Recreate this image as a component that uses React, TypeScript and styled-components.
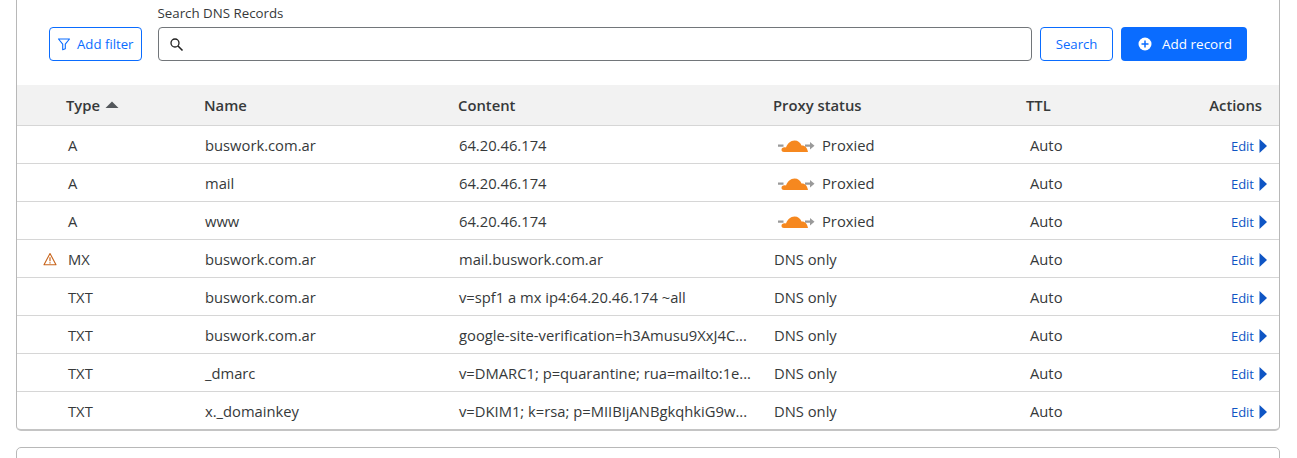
import { createGlobalStyle, styled } from 'styled-components';

interface IRecord {
    type: string,
    name: string,
    content: string,
    proxied: boolean,
    warning?: boolean
}

const records: IRecord[] = [
    { type: 'A', name: 'buswork.com.ar', content: '64.20.46.174', proxied: true },
    { type: 'A', name: 'mail', content: '64.20.46.174', proxied: true },
    { type: 'A', name: 'www', content: '64.20.46.174', proxied: true },
    { type: 'MX', name: 'buswork.com.ar', content: 'mail.buswork.com.ar', proxied: false, warning: true },
    { type: 'TXT', name: 'buswork.com.ar', content: 'v=spf1 a mx ip4:64.20.46.174 ~all', proxied: false },
    { type: 'TXT', name: 'buswork.com.ar', content: 'google-site-verification=h3Amusu9XxJ4C...', proxied: false },
    { type: 'TXT', name: '_dmarc', content: 'v=DMARC1; p=quarantine; rua=mailto:1e...', proxied: false },
    { type: 'TXT', name: 'x._domainkey', content: 'v=DKIM1; k=rsa; p=MIIBIjANBgkqhkiG9w...', proxied: false },
];

const GlobalStyle = createGlobalStyle`
    html, body {
        margin: 0;
        padding: 0;
        background: #fff;
        overflow: hidden;
    }
    body {
        font-family: "Open Sans", "Noto Sans", sans-serif;
        color: #36393a;
    }
`
const Page = styled.div`
    width: 1297px;
    height: 458px;
    padding: 0 17px 0 16px;
    box-sizing: border-box;
    overflow: hidden;
`
const Card = styled.div`
    border: 1px solid #b8b8b8;
    border-top: 0;
    border-bottom-width: 2px;
    border-bottom-color: #c4c4c4;
    border-radius: 0 0 5px 5px;
`
const NextCard = styled.div`
    margin-top: 16px;
    height: 40px;
    border: 1px solid #b8b8b8;
    border-radius: 5px 5px 0 0;
`
const Toolbar = styled.div`
    height: 85px;
    box-sizing: border-box;
    padding: 6px 32px 24px 32px;
    display: flex;
    align-items: flex-end;
    gap: 8px;
`
const SearchField = styled.div`
    flex: 1;
    margin-left: 8px;
    display: flex;
    flex-direction: column;
    gap: 6px;
`
const SearchLabel = styled.label`
    font-size: 13.3px;
    line-height: 16px;
    color: #36393a;
`
const SearchBox = styled.div`
    height: 34px;
    box-sizing: border-box;
    border: 1px solid #72767a;
    border-radius: 4px;
    display: flex;
    align-items: center;
    padding-left: 10px;
`
const OutlineButton = styled.button<{ $pad: number, $gap?: number }>`
    height: 34px;
    box-sizing: border-box;
    padding: 0 ${p => p.$pad}px;
    display: flex;
    align-items: center;
    gap: ${p => p.$gap ?? 0}px;
    background: #fff;
    border: 1px solid #0a6cff;
    border-radius: 4px;
    color: #0a6cff;
    font-family: inherit;
    font-size: 13.2px;
    white-space: nowrap;
`
const PrimaryButton = styled.button`
    height: 34px;
    box-sizing: border-box;
    padding: 0 15px 0 17px;
    display: flex;
    align-items: center;
    gap: 10px;
    background: #0a6cff;
    border: 0;
    border-radius: 4px;
    color: #fff;
    font-family: inherit;
    font-size: 13.5px;
    white-space: nowrap;
`
const Grid = `
    display: grid;
    grid-template-columns: 187px 254px 315px 253px 1fr 112px;
    align-items: center;
`
const HeaderRow = styled.div`
    ${Grid}
    height: 41px;
    box-sizing: border-box;
    background: #f2f2f2;
    border-bottom: 1px solid #d6d6d6;
    font-size: 14.8px;
    font-weight: 600;
    color: #36393a;
`
const HeaderCell = styled.div<{ $left?: number }>`
    padding-left: ${p => p.$left ?? 0}px;
    display: flex;
    align-items: center;
    gap: 5px;
`
const ActionsHead = styled.div`
    text-align: right;
    padding-right: 17px;
`
const Row = styled.div`
    ${Grid}
    height: 38px;
    box-sizing: border-box;
    padding-top: 1px;
    border-bottom: 1px solid #d6d6d6;
    font-size: 14.75px;
    color: #36393a;
    &:last-child {
        border-bottom: 0;
        height: 37px;
    }
`
const TypeCell = styled.div`
    position: relative;
    padding-left: 51px;
`
const WarnIcon = styled.svg`
    position: absolute;
    left: 26px;
    top: 50%;
    margin-top: -7px;
`
const NameCell = styled.div`
    padding-left: 1px;
`
const ContentCell = styled.div`
    padding-left: 1px;
    white-space: nowrap;
`
const ProxyCell = styled.div`
    padding-left: 1px;
    display: flex;
    align-items: center;
    gap: 7px;
`
const CloudSvg = styled.svg`
    margin-left: 3px;
`
const TtlCell = styled.div`
    padding-left: 4px;
`
const EditLink = styled.a`
    display: flex;
    justify-content: flex-end;
    align-items: center;
    gap: 5px;
    padding: 1px 12px 0 0;
    color: #0f55c4;
    font-size: 13px;
`

const SearchIcon = () => (
    <svg width="15" height="15" viewBox="0 0 15 15" fill="none" stroke="#222" strokeWidth="1.3">
        <circle cx="6" cy="6" r="4" />
        <path d="M9 9l4.5 4.5" strokeWidth="1.6" />
    </svg>
);

const FilterIcon = () => (
    <svg width="14" height="14" viewBox="0 0 14 14" fill="none" stroke="#0a6cff" strokeWidth="1.1">
        <path d="M1.5 2h11L8.3 7.2v4.6l-2.6 1V7.2z" strokeLinejoin="round" />
    </svg>
);

const PlusIcon = () => (
    <svg width="14" height="14" viewBox="0 0 14 14">
        <circle cx="7" cy="7" r="6.5" fill="#fff" />
        <path d="M7 3.5v7M3.5 7h7" stroke="#0a6cff" strokeWidth="1.5" />
    </svg>
);

const SortIcon = () => (
    <svg width="14" height="8" viewBox="0 0 14 8">
        <path d="M7 .5L13.5 7H.5z" fill="#54585c" />
    </svg>
);

const Cloud = () => (
    <CloudSvg width="38" height="16" viewBox="0 0 38 16">
        <path d="M1 7.600h5.500v2.200H1zM28 7.600h6v2.200h-6z" fill="#9a9a9a" />
        <path d="M33 5l4.500 3.700L33 12.400z" fill="#9a9a9a" />
        <path d="M7 15c-1.500 0-2.500-1-2.500-2.300 0-1.400 1.100-2.500 3-2.500.5 0 1 .1 1.500.3C10.500 6.500 13.500 3.500 17.500 3.500c3.500 0 6 2 7 5 3.300-.3 6 2.500 6.500 6.500z" fill="#f6881f" />
    </CloudSvg>
);

const Warning = () => (
    <WarnIcon width="14" height="14" viewBox="0 0 14 14" fill="none" stroke="#c8641b" strokeWidth="1.1">
        <path d="M7 1.500L13 12.800H1z" strokeLinejoin="round" />
        <path d="M7 5.200v4M7 10.200v1.200" strokeWidth="1.200" />
    </WarnIcon>
);

const Caret = () => (
    <svg width="8" height="14" viewBox="0 0 8 14">
        <path d="M.5 0L8 7 .5 14z" fill="#0f55c4" />
    </svg>
);

const App: React.FC = () => {
    return (
        <Page>
            <GlobalStyle />
            <Card>
                <Toolbar>
                    <OutlineButton $pad={7} $gap={6}><FilterIcon />Add filter</OutlineButton>
                    <SearchField>
                        <SearchLabel>Search DNS Records</SearchLabel>
                        <SearchBox><SearchIcon /></SearchBox>
                    </SearchField>
                    <OutlineButton $pad={14.5}>Search</OutlineButton>
                    <PrimaryButton><PlusIcon />Add record</PrimaryButton>
                </Toolbar>
                <HeaderRow>
                    <HeaderCell $left={49}>Type <SortIcon /></HeaderCell>
                    <HeaderCell>Name</HeaderCell>
                    <HeaderCell>Content</HeaderCell>
                    <HeaderCell>Proxy status</HeaderCell>
                    <HeaderCell>TTL</HeaderCell>
                    <ActionsHead>Actions</ActionsHead>
                </HeaderRow>
                {records.map((r, i) => (
                    <Row key={i}>
                        <TypeCell>{r.warning && <Warning />}{r.type}</TypeCell>
                        <NameCell>{r.name}</NameCell>
                        <ContentCell>{r.content}</ContentCell>
                        {r.proxied
                            ? <ProxyCell><Cloud />Proxied</ProxyCell>
                            : <ProxyCell>DNS only</ProxyCell>}
                        <TtlCell>Auto</TtlCell>
                        <EditLink>Edit <Caret /></EditLink>
                    </Row>
                ))}
            </Card>
            <NextCard />
        </Page>
    );
}

export default App;
